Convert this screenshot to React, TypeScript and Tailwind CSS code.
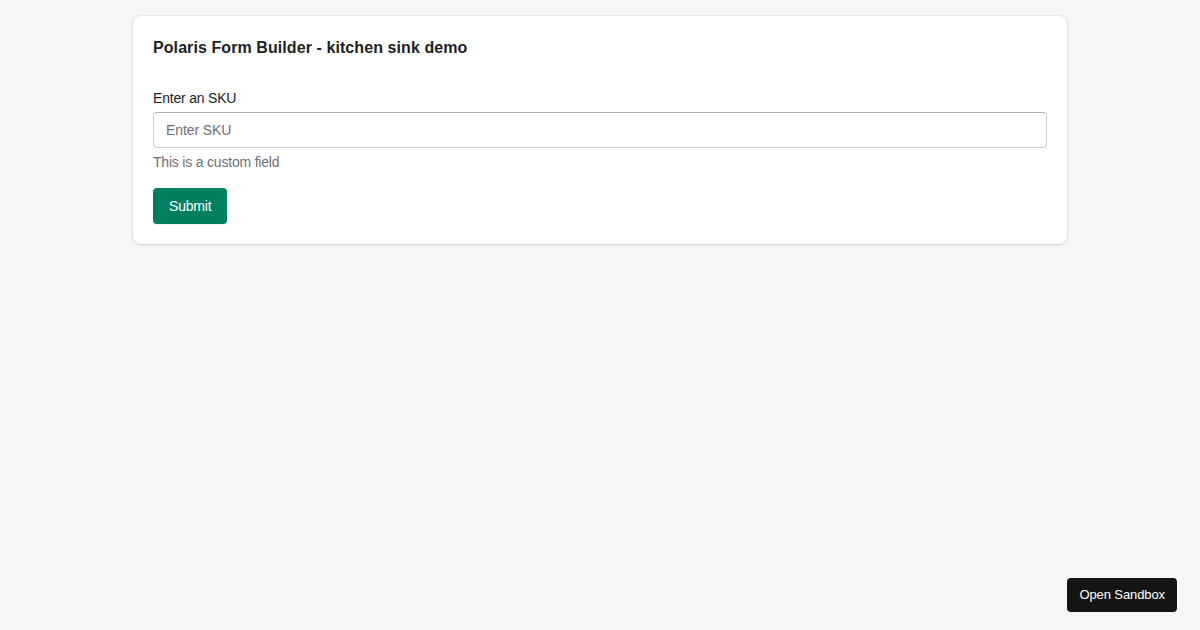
const FONT = "font-['Liberation_Sans',Arial,sans-serif]";

export default function App() {
  return (
    <div className={`min-h-[630px] bg-[#f6f6f6] pt-4 text-[#202223] ${FONT}`}>
      {/* Card */}
      <div className="mx-auto w-[934px] rounded-lg bg-white p-5 shadow-[0_0_0_1px_rgba(63,63,68,0.05),0_1px_3px_0_rgba(63,63,68,0.15)]">
        <h2 className="text-base leading-6 font-bold tracking-[0.08px]">Polaris Form Builder - kitchen sink demo</h2>

        <form className="mt-[28px] tracking-[-0.2px]" onSubmit={(e) => e.preventDefault()}>
          <label htmlFor="sku" className="mb-1 block text-sm leading-5">
            Enter an SKU
          </label>
          <input
            id="sku"
            placeholder="Enter SKU"
            className="block h-9 w-full rounded border border-[#c9cccf] border-t-[#aeb4b9] px-3 text-sm tracking-[-0.1px] text-[#202223] placeholder:text-[#6d7175] outline-none"
          />
          <p className="mt-1 text-sm leading-5 text-[#6d7175]">This is a custom field</p>

          <button
            type="submit"
            className="mt-4 h-9 rounded bg-[#008060] px-4 text-sm text-white shadow-[0_1px_0_rgba(0,0,0,0.05)]"
          >
            Submit
          </button>
        </form>
      </div>

      {/* Floating sandbox link */}
      <button className="fixed right-[23px] bottom-[18px] h-[34px] rounded-[4px] bg-[#151515] px-3 text-[13px] tracking-[-0.1px] text-white">
        Open Sandbox
      </button>
    </div>
  );
}
